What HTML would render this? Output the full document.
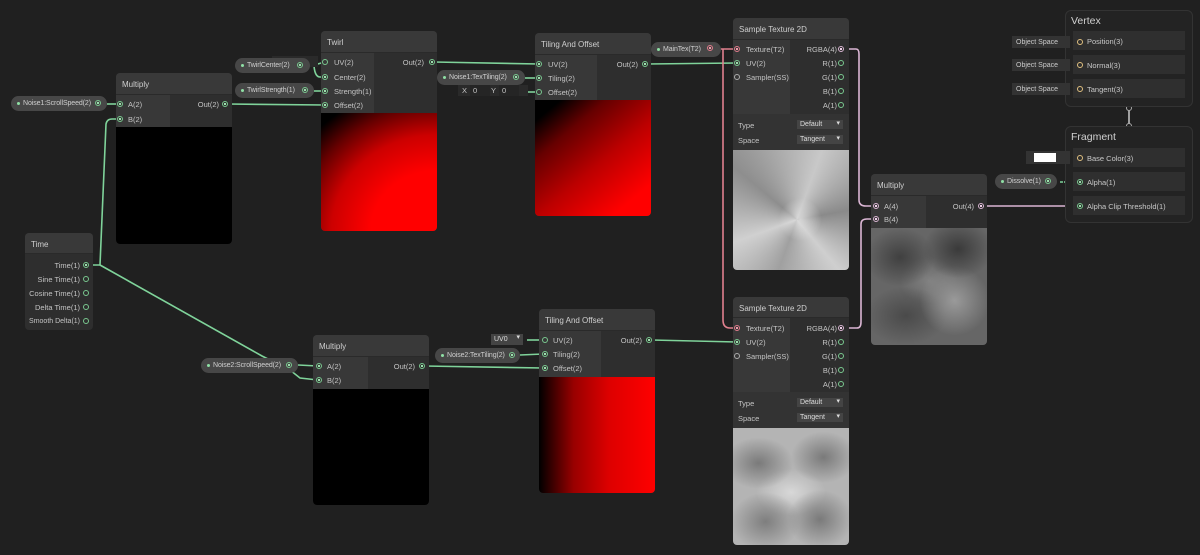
<!DOCTYPE html>
<html><head><meta charset="utf-8"><style>
*{margin:0;padding:0;box-sizing:border-box}
body{width:1200px;height:555px;background:#202020;position:relative;overflow:hidden;font-family:"Liberation Sans",sans-serif;font-size:7.5px;color:#c4c4c4}
div,span{position:absolute}
.b{background:#2e2e2e;border-radius:4px}
.h{background:#393939;color:#cfcfcf;font-size:8px;padding:7px 0 0 6px;border-radius:4px 4px 0 0;border-bottom:1px solid #2a2a2a}
.i{background:#383838}
.o{background:#2e2e2e}
.ta{background:#333}
.t{white-space:nowrap;line-height:9px}
.r{text-align:right;white-space:nowrap;line-height:9px}
.p{width:6px;height:6px;border-radius:50%;border:1px solid #79c88f;background:radial-gradient(#9be0ad 38%,transparent 45%)}
.p.e{background:none}
.p.k{border-color:#e07c8c;background:radial-gradient(#f09aa8 38%,transparent 45%)}
.p.w{border-color:#d9b5d2;background:radial-gradient(#f0d0ea 38%,transparent 45%)}
.p.g{border-color:#aaa;background:none}
.pill{background:#474747;border-radius:8px;height:15px;line-height:15px;color:#cfcfcf;padding:0 0 0 12px;white-space:nowrap;font-size:7px;letter-spacing:-0.1px}
.pill:before{content:"";position:absolute;left:6px;top:6px;width:3px;height:3px;border-radius:50%;background:#8fe0a5}
.dd{background:#444;color:#ddd;font-size:7px;padding:1px 0 0 3px;height:9px;line-height:8px}
.dd:after{content:"▾";position:absolute;right:3px;top:0}
.row{background:#2f2f2f;height:19px;padding:6px 0 0 14px;color:#c8c8c8}
.os{background:#333;color:#ccc;height:12px;padding:3px 0 0 4px;font-size:7px;white-space:nowrap}
.blk{background:#232323;border:1px solid #333;border-radius:6px}
</style></head><body>

<svg width="1200" height="555" style="position:absolute;left:0;top:0" fill="none" stroke-width="1.6">
<g stroke="#7fd39a">
<path d="M107 104 L120 104"/>
<path d="M90 265 L100 265 L106 124 Q107 119 112 119 L120 119"/>
<path d="M100 265 L262 356 L290 370 L300 378 L318 380"/>
<path d="M298 365 L318 366"/>
<path d="M227 104 L325 105"/>
<path d="M314 65 L325 62"/>
<path d="M314 66 Q315 77 320 77 L325 77"/>
<path d="M314 91 L325 91"/>
<path d="M434 62 L539 64"/>
<path d="M525 78 L539 78"/>
<path d="M526 92 L539 92"/>
<path d="M647 64 L737 63"/>
<path d="M424 366 L543 368"/>
<path d="M520 355 L543 354"/>
<path d="M527 340 L543 340"/>
<path d="M651 340 L737 342"/>
<path d="M1066 42 L1080 42 M1066 65 L1080 65 M1066 89 L1080 89 M1066 158 L1080 158"/>
<path d="M1060 182 L1078 182" stroke-dasharray="3 1"/>
</g>
<g stroke="#e0808e">
<path d="M720 49 L737 49"/>
<path d="M723 49 L723 320 Q723 328 730 328 L737 328"/>
</g>
<g stroke="#dbb6d4">
<path d="M845 49 L856 49 Q859 49 859 54 L859 200 Q859 206 866 206 L875 206"/>
<path d="M845 328 L857 328 Q861 328 861 322 L861 224 Q861 219 867 219 L875 219"/>
<path d="M983 206 L1078 206"/>
</g>
<g stroke="#c0c0c0"><path d="M1129 110 L1129 124"/></g>
<circle cx="1129" cy="108" r="2.5" stroke="#aaa" fill="#202020" stroke-width="1"/>
<circle cx="1129" cy="126" r="2.5" stroke="#aaa" fill="#202020" stroke-width="1"/>
</svg>

<!-- Multiply 1 -->
<div class="b" style="left:116px;top:73px;width:116px;height:171px"></div>
<div class="h" style="left:116px;top:73px;width:116px;height:22px">Multiply</div>
<div class="i" style="left:116px;top:95px;width:54px;height:32px"></div>
<div style="left:116px;top:127px;width:116px;height:117px;background:#000;border-radius:0 0 4px 4px"></div>
<div class="p" style="left:117px;top:101px"></div><div class="t" style="left:128px;top:100px">A(2)</div>
<div class="p" style="left:117px;top:116px"></div><div class="t" style="left:128px;top:115px">B(2)</div>
<div class="r" style="right:981px;top:100px">Out(2)</div><div class="p" style="left:222px;top:101px"></div>

<!-- Twirl -->
<div class="b" style="left:321px;top:31px;width:116px;height:200px"></div>
<div class="h" style="left:321px;top:31px;width:116px;height:22px">Twirl</div>
<div class="i" style="left:321px;top:53px;width:53px;height:60px"></div>
<div style="left:321px;top:113px;width:116px;height:118px;border-radius:0 0 4px 4px;background:radial-gradient(ellipse 190% 170% at 100% 100%,#f00 30%,#c00 48%,#600 62%,#200 70%,#000 74%)"></div>
<div class="p e" style="left:322px;top:59px"></div><div class="t" style="left:334px;top:58px">UV(2)</div>
<div class="p" style="left:322px;top:74px"></div><div class="t" style="left:334px;top:73px">Center(2)</div>
<div class="p" style="left:322px;top:88px"></div><div class="t" style="left:334px;top:87px">Strength(1)</div>
<div class="p" style="left:322px;top:102px"></div><div class="t" style="left:334px;top:101px">Offset(2)</div>
<div class="r" style="right:776px;top:58px">Out(2)</div><div class="p" style="left:429px;top:59px"></div>

<!-- Tiling 1 -->
<div class="b" style="left:535px;top:33px;width:116px;height:183px"></div>
<div class="h" style="left:535px;top:33px;width:116px;height:22px">Tiling And Offset</div>
<div class="i" style="left:535px;top:55px;width:62px;height:45px"></div>
<div style="left:535px;top:100px;width:116px;height:116px;border-radius:0 0 4px 4px;background:linear-gradient(140deg,#000 10%,#600 28%,#b00 55%,#f00 85%)"></div>
<div class="p" style="left:536px;top:61px"></div><div class="t" style="left:548px;top:60px">UV(2)</div>
<div class="p" style="left:536px;top:75px"></div><div class="t" style="left:548px;top:74px">Tiling(2)</div>
<div class="p e" style="left:536px;top:89px"></div><div class="t" style="left:548px;top:88px">Offset(2)</div>
<div class="r" style="right:562px;top:60px">Out(2)</div><div class="p" style="left:642px;top:61px"></div>
<div style="left:458px;top:85px;width:70px;height:11px;background:#2a2a2a"></div>
<div class="t" style="left:462px;top:86px">X</div><div style="left:470px;top:85px;width:20px;height:11px;background:#252525"></div><div class="t" style="left:473px;top:86px">0</div>
<div class="t" style="left:491px;top:86px">Y</div><div style="left:499px;top:85px;width:20px;height:11px;background:#252525"></div><div class="t" style="left:502px;top:86px">0</div>

<!-- Sample 1 -->
<div class="b" style="left:733px;top:18px;width:116px;height:252px"></div>
<div class="h" style="left:733px;top:18px;width:116px;height:22px">Sample Texture 2D</div>
<div class="i" style="left:733px;top:40px;width:57px;height:74px"></div>
<div class="ta" style="left:733px;top:114px;width:116px;height:36px"></div>
<div class="p k" style="left:734px;top:46px"></div><div class="t" style="left:746px;top:45px">Texture(T2)</div>
<div class="p" style="left:734px;top:60px"></div><div class="t" style="left:746px;top:59px">UV(2)</div>
<div class="p g" style="left:734px;top:74px"></div><div class="t" style="left:746px;top:73px">Sampler(SS)</div>
<div class="r" style="right:363px;top:45px">RGBA(4)</div><div class="p w" style="left:838px;top:46px"></div>
<div class="r" style="right:363px;top:59px">R(1)</div><div class="p e" style="left:838px;top:60px"></div>
<div class="r" style="right:363px;top:73px">G(1)</div><div class="p e" style="left:838px;top:74px"></div>
<div class="r" style="right:363px;top:87px">B(1)</div><div class="p e" style="left:838px;top:88px"></div>
<div class="r" style="right:363px;top:101px">A(1)</div><div class="p e" style="left:838px;top:102px"></div>
<div class="t" style="left:738px;top:121px">Type</div><div class="dd" style="left:797px;top:120px;width:46px">Default</div>
<div class="t" style="left:738px;top:136px">Space</div><div class="dd" style="left:797px;top:135px;width:46px">Tangent</div>
<div style="left:733px;top:150px;width:116px;height:120px;border-radius:0 0 4px 4px;background:radial-gradient(circle at 58% 58%,rgba(220,220,220,.9) 0,rgba(200,200,200,0) 22%),conic-gradient(from 20deg at 55% 58%,#c8c8c8,#8a8a8a 60deg,#cfcfcf 120deg,#a0a0a0 180deg,#d0d0d0 230deg,#8e8e8e 290deg,#c8c8c8 360deg)"></div>

<!-- Sample 2 -->
<div class="b" style="left:733px;top:297px;width:116px;height:248px"></div>
<div class="h" style="left:733px;top:297px;width:116px;height:21px">Sample Texture 2D</div>
<div class="i" style="left:733px;top:318px;width:57px;height:74px"></div>
<div class="ta" style="left:733px;top:392px;width:116px;height:36px"></div>
<div class="p k" style="left:734px;top:325px"></div><div class="t" style="left:746px;top:324px">Texture(T2)</div>
<div class="p" style="left:734px;top:339px"></div><div class="t" style="left:746px;top:338px">UV(2)</div>
<div class="p g" style="left:734px;top:353px"></div><div class="t" style="left:746px;top:352px">Sampler(SS)</div>
<div class="r" style="right:363px;top:324px">RGBA(4)</div><div class="p w" style="left:838px;top:325px"></div>
<div class="r" style="right:363px;top:338px">R(1)</div><div class="p e" style="left:838px;top:339px"></div>
<div class="r" style="right:363px;top:352px">G(1)</div><div class="p e" style="left:838px;top:353px"></div>
<div class="r" style="right:363px;top:366px">B(1)</div><div class="p e" style="left:838px;top:367px"></div>
<div class="r" style="right:363px;top:380px">A(1)</div><div class="p e" style="left:838px;top:381px"></div>
<div class="t" style="left:738px;top:399px">Type</div><div class="dd" style="left:797px;top:398px;width:46px">Default</div>
<div class="t" style="left:738px;top:414px">Space</div><div class="dd" style="left:797px;top:413px;width:46px">Tangent</div>
<div style="left:733px;top:428px;width:116px;height:117px;border-radius:0 0 4px 4px;background:radial-gradient(ellipse 30% 22% at 22% 30%,#7a7a7a,rgba(150,150,150,0)),radial-gradient(ellipse 28% 22% at 78% 25%,#7a7a7a,rgba(150,150,150,0)),radial-gradient(ellipse 30% 25% at 28% 80%,#7e7e7e,rgba(150,150,150,0)),radial-gradient(ellipse 28% 25% at 75% 78%,#7a7a7a,rgba(150,150,150,0)),radial-gradient(ellipse 30% 20% at 50% 55%,#d8d8d8,rgba(200,200,200,0)),#b4b4b4"></div>

<!-- Multiply right -->
<div class="b" style="left:871px;top:174px;width:116px;height:171px"></div>
<div class="h" style="left:871px;top:174px;width:116px;height:22px">Multiply</div>
<div class="i" style="left:871px;top:196px;width:55px;height:32px"></div>
<div style="left:871px;top:228px;width:116px;height:117px;border-radius:0 0 4px 4px;background:radial-gradient(ellipse 30% 25% at 25% 25%,#404040,rgba(90,90,90,0)),radial-gradient(ellipse 30% 25% at 75% 18%,#3a3a3a,rgba(90,90,90,0)),radial-gradient(ellipse 30% 30% at 72% 62%,#9a9a9a,rgba(120,120,120,0)),radial-gradient(ellipse 35% 25% at 30% 75%,#4a4a4a,rgba(90,90,90,0)),radial-gradient(ellipse 25% 20% at 50% 45%,#808080,rgba(120,120,120,0)),#666"></div>
<div class="p w" style="left:873px;top:203px"></div><div class="t" style="left:884px;top:202px">A(4)</div>
<div class="p w" style="left:873px;top:216px"></div><div class="t" style="left:884px;top:215px">B(4)</div>
<div class="r" style="right:226px;top:202px">Out(4)</div><div class="p w" style="left:978px;top:203px"></div>

<!-- Time -->
<div class="b" style="left:25px;top:233px;width:68px;height:97px"></div>
<div class="h" style="left:25px;top:233px;width:68px;height:21px">Time</div>
<div class="r" style="right:1120px;top:261px">Time(1)</div><div class="p" style="left:83px;top:262px"></div>
<div class="r" style="right:1120px;top:275px">Sine Time(1)</div><div class="p e" style="left:83px;top:276px"></div>
<div class="r" style="right:1120px;top:289px">Cosine Time(1)</div><div class="p e" style="left:83px;top:290px"></div>
<div class="r" style="right:1120px;top:303px">Delta Time(1)</div><div class="p e" style="left:83px;top:304px"></div>
<div class="r" style="right:1120px;top:317px;font-size:7px">Smooth Delta(1)</div><div class="p e" style="left:83px;top:318px"></div>

<!-- Multiply bottom -->
<div class="b" style="left:313px;top:335px;width:116px;height:170px"></div>
<div class="h" style="left:313px;top:335px;width:116px;height:22px">Multiply</div>
<div class="i" style="left:313px;top:357px;width:55px;height:32px"></div>
<div style="left:313px;top:389px;width:116px;height:116px;background:#000;border-radius:0 0 4px 4px"></div>
<div class="p" style="left:316px;top:363px"></div><div class="t" style="left:327px;top:362px">A(2)</div>
<div class="p" style="left:316px;top:377px"></div><div class="t" style="left:327px;top:376px">B(2)</div>
<div class="r" style="right:785px;top:362px">Out(2)</div><div class="p" style="left:419px;top:363px"></div>

<!-- Tiling bottom -->
<div class="b" style="left:539px;top:309px;width:116px;height:184px"></div>
<div class="h" style="left:539px;top:309px;width:116px;height:22px">Tiling And Offset</div>
<div class="i" style="left:539px;top:331px;width:62px;height:46px"></div>
<div style="left:539px;top:377px;width:116px;height:116px;border-radius:0 0 4px 4px;background:linear-gradient(90deg,#000 0,#900 30%,#d00 60%,#f00 100%)"></div>
<div class="p e" style="left:542px;top:337px"></div><div class="t" style="left:553px;top:336px">UV(2)</div>
<div class="p" style="left:542px;top:351px"></div><div class="t" style="left:553px;top:350px">Tiling(2)</div>
<div class="p" style="left:542px;top:365px"></div><div class="t" style="left:553px;top:364px">Offset(2)</div>
<div class="r" style="right:558px;top:336px">Out(2)</div><div class="p" style="left:646px;top:337px"></div>
<div class="dd" style="left:491px;top:334px;width:32px;height:11px;padding-top:2px">UV0</div>

<!-- Pills -->
<div class="pill" style="left:11px;top:96px;width:96px">Noise1:ScrollSpeed(2)</div><div class="p" style="left:95px;top:100px"></div>
<div style="left:272px;top:56px;width:46px;height:11px;background:#2a2a2a"></div>
<div class="pill" style="left:235px;top:58px;width:75px">TwirlCenter(2)</div><div class="p" style="left:297px;top:62px"></div>
<div class="pill" style="left:235px;top:83px;width:79px">TwirlStrength(1)</div><div class="p" style="left:302px;top:87px"></div>
<div class="pill" style="left:437px;top:70px;width:88px">Noise1:TexTiling(2)</div><div class="p" style="left:513px;top:74px"></div>
<div class="pill" style="left:651px;top:42px;width:70px">MainTex(T2)</div><div class="p k" style="left:707px;top:45px"></div>
<div class="pill" style="left:201px;top:358px;width:97px">Noise2:ScrollSpeed(2)</div><div class="p" style="left:286px;top:362px"></div>
<div class="pill" style="left:435px;top:348px;width:85px">Noise2:TexTiling(2)</div><div class="p" style="left:509px;top:352px"></div>
<div class="pill" style="left:995px;top:174px;width:62px">Dissolve(1)</div><div class="p" style="left:1045px;top:178px"></div>

<!-- Vertex / Fragment -->
<div class="blk" style="left:1065px;top:10px;width:128px;height:97px"></div>
<div class="t" style="left:1071px;top:15px;font-size:10.5px;line-height:13px;color:#d0d0d0">Vertex</div>
<div class="row" style="left:1073px;top:31px;width:112px">Position(3)</div>
<div class="row" style="left:1073px;top:55px;width:112px">Normal(3)</div>
<div class="row" style="left:1073px;top:79px;width:112px">Tangent(3)</div>
<div class="blk" style="left:1065px;top:126px;width:128px;height:97px"></div>
<div class="t" style="left:1071px;top:131px;font-size:10.5px;line-height:13px;color:#d0d0d0">Fragment</div>
<div class="row" style="left:1073px;top:148px;width:112px">Base Color(3)</div>
<div class="row" style="left:1073px;top:172px;width:112px">Alpha(1)</div>
<div class="row" style="left:1073px;top:196px;width:112px">Alpha Clip Threshold(1)</div>
<div class="p e" style="left:1077px;top:39px;border-color:#e0c080"></div>
<div class="p e" style="left:1077px;top:62px;border-color:#e0c080"></div>
<div class="p e" style="left:1077px;top:86px;border-color:#e0c080"></div>
<div class="p e" style="left:1077px;top:155px;border-color:#e0c080"></div>
<div class="p" style="left:1077px;top:179px"></div>
<div class="p" style="left:1077px;top:203px"></div>
<div class="os" style="left:1012px;top:36px;width:58px">Object Space</div>
<div class="os" style="left:1012px;top:59px;width:58px">Object Space</div>
<div class="os" style="left:1012px;top:83px;width:58px">Object Space</div>
<div style="left:1026px;top:151px;width:44px;height:13px;background:#333"></div>
<div style="left:1034px;top:153px;width:22px;height:9px;background:#fff"></div>
</body></html>
